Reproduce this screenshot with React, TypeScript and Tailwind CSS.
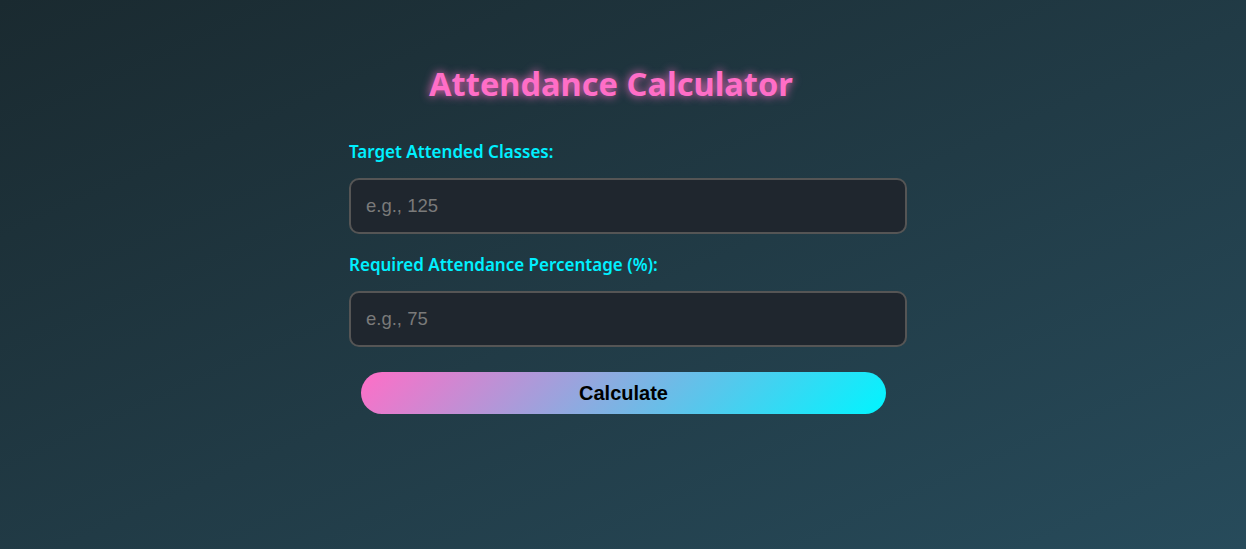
import React from "react";

export default function App() {
  return (
    <div className="min-h-[549px] w-full bg-gradient-to-br from-[#1a2a30] to-[#274b5b] pt-[60px]" style={{ fontFamily: '"Noto Sans", "Open Sans", sans-serif' }}>
      <div className="mx-auto w-[568px] pl-[10px]">
        <h1 className="pr-[34px] text-center text-[32.6px] font-bold leading-[48px] text-[#ff6ec7] [text-shadow:0_0_10px_#ff6ec7]">
          Attendance Calculator
        </h1>
        <div className="mt-[32px] flex flex-col">
          <label className="text-[17px] font-semibold leading-[23px] text-[#00f0ff]">Target Attended Classes:</label>
          <input
            type="number"
            placeholder="e.g., 125"
            className="mt-[15px] h-[56px] w-[558px] rounded-[10px] border-2 border-[#555555] bg-[#1f262e] px-[15px] text-[18.5px] text-white outline-none placeholder:text-[#7a7a7a]"
            style={{ fontFamily: '"Liberation Sans", Arial, sans-serif' }}
          />
          <label className="mt-[19px] text-[17px] font-semibold leading-[23px] text-[#00f0ff]">Required Attendance Percentage (%):</label>
          <input
            type="number"
            placeholder="e.g., 75"
            className="mt-[15px] h-[56px] w-[558px] rounded-[10px] border-2 border-[#555555] bg-[#1f262e] px-[15px] text-[18.5px] text-white outline-none placeholder:text-[#7a7a7a]"
            style={{ fontFamily: '"Liberation Sans", Arial, sans-serif' }}
          />
          <button
            className="ml-[12px] mt-[25px] h-[42px] w-[525px] rounded-full bg-[linear-gradient(135deg,#ff6ec7,#00f5ff)] text-[20px] font-bold text-black"
            style={{ fontFamily: '"Liberation Sans", Arial, sans-serif' }}
          >
            Calculate
          </button>
        </div>
      </div>
    </div>
  );
}
